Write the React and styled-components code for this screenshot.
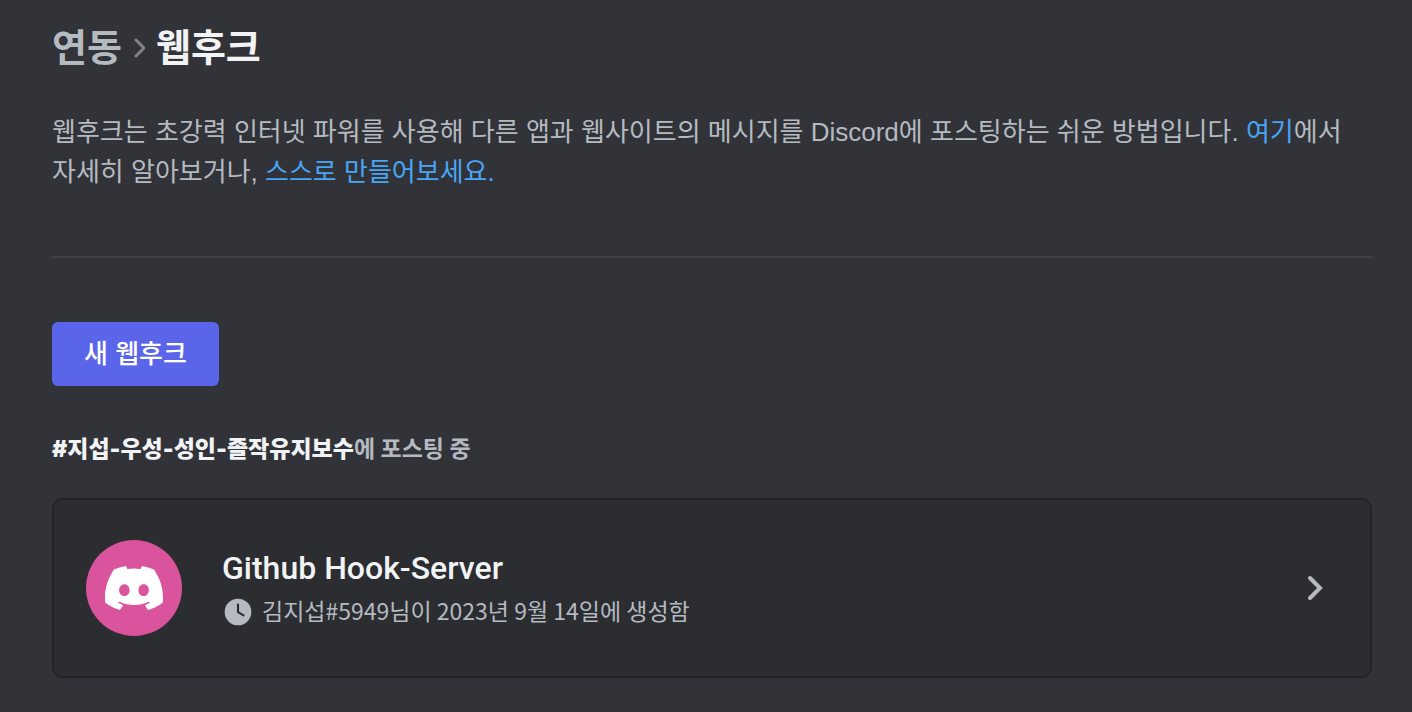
import styled, { createGlobalStyle } from "styled-components";
import { SiDiscord } from "react-icons/si";

const channel = "#지섭-우성-성인-졸작유지보수";

const webhooks = [
  {
    id: 1,
    name: "Github Hook-Server",
    info: "김지섭#5949님이 2023년 9월 14일에 생성함",
  },
];

function ClockIcon() {
  return (
    <svg width="32" height="32" viewBox="0 0 24 24" aria-hidden="true">
      <path
        fill="currentColor"
        fillRule="evenodd"
        d="M12 2a10 10 0 1 0 0 20 10 10 0 0 0 0-20Zm0 3.6c.44 0 .8.36.8.8v5.14l3.77 2.33a.8.8 0 0 1-.84 1.36l-4.15-2.56a.8.8 0 0 1-.38-.68V6.4c0-.44.36-.8.8-.8Z"
      />
    </svg>
  );
}

export default function App() {
  return (
    <>
      <GlobalStyle />
      <Page>
        <Breadcrumb>
          <CrumbLink href="#integrations">연동</CrumbLink>
          <svg width="12" height="20" viewBox="0 0 12 20" aria-hidden="true">
            <path
              d="M3 2l8 8-8 8"
              fill="none"
              stroke="#80848e"
              strokeWidth="3"
              strokeLinecap="round"
            />
          </svg>
          <Title>웹후크</Title>
        </Breadcrumb>

        <Description>
          웹후크는 초강력 인터넷 파워를 사용해 다른 앱과 웹사이트의 메시지를
          Discord에 포스팅하는 쉬운 방법입니다. <Link href="#here">여기</Link>
          에서 자세히 알아보거나, <Link href="#build">스스로 만들어보세요.</Link>
        </Description>

        <Divider />

        <NewButton type="button">새 웹후크</NewButton>

        <Posting>
          <strong>{channel}</strong>에 포스팅 중
        </Posting>

        {webhooks.map((hook) => (
          <Card key={hook.id} type="button">
            <Avatar>
              <SiDiscord size={58} />
            </Avatar>
            <Info>
              <Name>{hook.name}</Name>
              <Meta>
                <ClockIcon />
                {hook.info}
              </Meta>
            </Info>
            <svg width="16" height="26" viewBox="0 0 16 26" aria-hidden="true">
              <path
                d="M2 3l10 10L2 23"
                fill="none"
                stroke="#b5bac1"
                strokeWidth="4"
                strokeLinecap="round"
              />
            </svg>
          </Card>
        ))}
      </Page>
    </>
  );
}

const GlobalStyle = createGlobalStyle`
  * {
    box-sizing: border-box;
  }
  body {
    margin: 0;
    background: #313338;
    color: #b5bac1;
    font-family: "Liberation Sans", "Noto Sans CJK KR", sans-serif;
  }
  button {
    font-family: inherit;
    cursor: pointer;
  }
`;

const Page = styled.main`
  padding: 20px 40px 34px 52px;
`;

const Breadcrumb = styled.nav`
  display: flex;
  align-items: center;
  gap: 11px;
  font-size: 38px;
  font-weight: 700;
  line-height: 56px;
`;

const CrumbLink = styled.a`
  color: #b5bac1;
  text-decoration: none;
`;

const Title = styled.h1`
  margin: 0;
  color: #f2f3f5;
  font-size: 38px;
  font-weight: 700;
`;

const Description = styled.p`
  margin: 36px 0 64px;
  font-size: 26px;
  line-height: 40px;
  word-break: keep-all;
`;

const Link = styled.a`
  color: #49a5f5;
  text-decoration: none;
`;

const Divider = styled.hr`
  height: 2px;
  margin: 0 0 64px;
  border: 0;
  background: #3f4147;
`;

const NewButton = styled.button`
  display: block;
  padding: 12px 32px;
  border: 0;
  border-radius: 6px;
  background: #5b65ea;
  color: #fff;
  font-size: 26px;
  font-weight: 500;
  line-height: 40px;
`;

const Posting = styled.h2`
  margin: 48px 0 34px;
  color: #b5bac1;
  font-family: Inter, "Noto Sans CJK KR", sans-serif;
  font-size: 23px;
  font-weight: 700;
  line-height: 30px;

  strong {
    color: #f2f3f5;
  }
`;

const Card = styled.button`
  display: flex;
  align-items: center;
  width: 100%;
  min-height: 180px;
  padding: 32px 46px 32px 32px;
  border: 2px solid #232428;
  border-radius: 10px;
  background: #2b2d31;
  color: #b5bac1;
  text-align: left;
`;

const Avatar = styled.span`
  display: flex;
  align-items: center;
  justify-content: center;
  width: 96px;
  height: 96px;
  border-radius: 50%;
  background: #d9539d;
  color: #fff;
`;

const Info = styled.span`
  flex: 1;
  margin-left: 40px;
`;

const Name = styled.span`
  display: block;
  color: #f2f3f5;
  font-family: Roboto, "Noto Sans CJK KR", sans-serif;
  font-size: 32px;
  font-weight: 500;
  line-height: 40px;
`;

const Meta = styled.span`
  display: flex;
  align-items: flex-start;
  gap: 8px;
  margin-top: 8px;
  font-family: "Noto Sans CJK KR", sans-serif;
  font-size: 23px;
  line-height: 28px;
`;
